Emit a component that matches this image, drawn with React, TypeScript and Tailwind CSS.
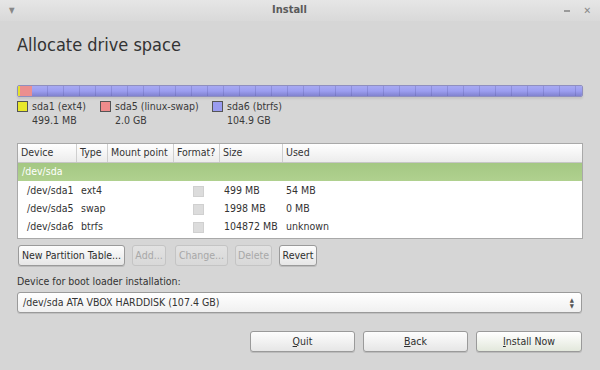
import React from "react";

const font = { fontFamily: '"DejaVu Sans Condensed", "DejaVu Sans", sans-serif', fontStretch: "semi-condensed" as const };

function Btn({ children, w, disabled, className = "" }: { children: React.ReactNode; w: string; disabled?: boolean; className?: string }) {
  return (
    <div
      className={`${w} h-[21px] flex items-center justify-center whitespace-nowrap rounded-[3px] border text-[10.5px] ${
        disabled
          ? "border-[#c4c4c4] text-[#a8a8a8] bg-gradient-to-b from-[#e2e2e2] to-[#d8d8d8]"
          : "border-[#9a9a9a] text-[#2e2e2e] bg-gradient-to-b from-[#fdfdfd] to-[#e6e6e6] shadow-[0_1px_0_rgba(0,0,0,0.12)]"
      } ${className}`}
    >
      {children}
    </div>
  );
}

function Check() {
  return <div className="w-[11px] h-[11px] bg-[#dcdcdc] border border-[#d0d0d0]" />;
}

export default function App() {
  const rows = [
    ["/dev/sda1", "ext4", "499 MB", "54 MB"],
    ["/dev/sda5", "swap", "1998 MB", "0 MB"],
    ["/dev/sda6", "btrfs", "104872 MB", "unknown"],
  ];
  const ticks = Array.from({ length: 36 });
  return (
    <div style={font} className="w-[600px] h-[370px] bg-[#d6d6d6] overflow-hidden flex flex-col text-[#333] whitespace-nowrap">
      {/* title bar */}
      <div className="h-[21px] bg-gradient-to-b from-[#e6e6e6] to-[#d9d9d9] flex items-center px-[9px] relative">
        <span className="text-[8px] text-[#888] leading-none">▼</span>
        <div className="flex-1 text-center text-[11px] font-bold text-[#5a5a5a]">Install</div>
        <div className="flex items-center gap-[13px] text-[#888]">
          <div className="w-[6px] h-[2px] bg-[#9a9a9a]" />
          <span className="text-[10px] font-bold leading-none">✕</span>
        </div>
      </div>

      <div className="px-[17px] flex flex-col">
        <div className="mt-[13px] text-[18px] leading-[22px] text-[#333]">Allocate drive space</div>

        {/* bar */}
        <div className="mt-[29px] h-[12px] w-[566px] flex rounded-[2px] border border-[#8f8fbf] relative overflow-hidden shadow-[0_2px_2px_rgba(0,0,0,0.08)]">
          <div className="w-[2px] bg-[#e5e02a]" />
          <div className="w-[12px] bg-[#eb8f8f]" />
          <div className="flex-1 bg-gradient-to-b from-[#a7a9f2] via-[#9c9ef0] to-[#8082cf]" />
          <div className="absolute inset-0 flex pl-[14px]">
            {ticks.map((_, i) => (
              <div key={i} className="w-[16px] shrink-0 border-r border-[rgba(80,80,150,0.25)]" />
            ))}
          </div>
        </div>

        {/* legend */}
        <div className="mt-[2px] flex text-[10.5px] leading-[14px] text-[#3a3a3a]">
          <div className="w-[83px] flex gap-[4px]">
            <div className="w-[11px] h-[11px] mt-[2px] bg-[#e8e82a] border border-[#555]" />
            <div>
              <div>sda1 (ext4)</div>
              <div>499.1 MB</div>
            </div>
          </div>
          <div className="w-[112px] flex gap-[4px]">
            <div className="w-[11px] h-[11px] mt-[2px] bg-[#ee8c8c] border border-[#555]" />
            <div>
              <div>sda5 (linux-swap)</div>
              <div>2.0 GB</div>
            </div>
          </div>
          <div className="flex gap-[4px]">
            <div className="w-[11px] h-[11px] mt-[2px] bg-[#9a9cf0] border border-[#555]" />
            <div>
              <div>sda6 (btrfs)</div>
              <div>104.9 GB</div>
            </div>
          </div>
        </div>

        {/* table */}
        <div className="mt-[16px] w-[566px] h-[96px] bg-white border border-[#a9a9a9] text-[10.5px] text-[#333]">
          <div className="h-[19px] flex bg-gradient-to-b from-[#ffffff] to-[#ececec] border-b border-[#c6c6c6]">
            {[
              ["Device", "w-[59px]"],
              ["Type", "w-[31px]"],
              ["Mount point", "w-[66px]"],
              ["Format?", "w-[46px]"],
              ["Size", "w-[63px]"],
              ["Used", "flex-1"],
            ].map(([t, w], i) => (
              <div key={i} className={`${w} px-[3px] flex items-center overflow-hidden ${i < 5 ? "border-r border-[#cfcfcf]" : ""}`}>
                {t}
              </div>
            ))}
          </div>
          <div className="h-[18px] flex items-center px-[4px] bg-gradient-to-b from-[#a4c883] to-[#b0d18f] text-white">/dev/sda</div>
          <div className="pt-[1px]">
            {rows.map((r) => (
              <div key={r[0]} className="h-[18px] flex items-center">
                <div className="w-[63px] pl-[9px]">{r[0]}</div>
                <div className="w-[112px]">{r[1]}</div>
                <div className="w-[31px] flex"><Check /></div>
                <div className="w-[62px]">{r[2]}</div>
                <div className="flex-1">{r[3]}</div>
              </div>
            ))}
          </div>
        </div>

        {/* buttons */}
        <div className="mt-[6px] flex">
          <Btn w="w-[107px]" className="ml-[1px]">New Partition Table...</Btn>
          <Btn w="w-[34px]" disabled className="ml-[7px]">Add...</Btn>
          <Btn w="w-[53px]" disabled className="ml-[9px]">Change...</Btn>
          <Btn w="w-[37px]" disabled className="ml-[7px]">Delete</Btn>
          <Btn w="w-[38px]" className="ml-[7px]">Revert</Btn>
        </div>

        <div className="mt-[8px] text-[10.5px] leading-[14px] text-[#333]">Device for boot loader installation:</div>

        <div className="mt-[4px] w-[565px] h-[21px] flex items-center rounded-[3px] border border-[#9a9a9a] bg-gradient-to-b from-[#ffffff] to-[#f0f0f0] px-[5px] text-[10.5px] shadow-[0_1px_0_rgba(0,0,0,0.1)]">
          <span className="flex-1">/dev/sda ATA VBOX HARDDISK (107.4 GB)</span>
          <div className="flex flex-col items-center text-[6px] leading-[6px] text-[#555] mr-[2px]">
            <span>▲</span>
            <span>▼</span>
          </div>
        </div>

        <div className="mt-[18px] flex justify-end gap-[8px] pr-[1px]">
          <Btn w="w-[105px]"><span><u>Q</u>uit</span></Btn>
          <Btn w="w-[105px]"><span><u>B</u>ack</span></Btn>
          <Btn w="w-[106px]" className="!bg-gradient-to-b !from-[#ffffff] !to-[#e3e8dc]"><span><u>I</u>nstall Now</span></Btn>
        </div>
      </div>
    </div>
  );
}
